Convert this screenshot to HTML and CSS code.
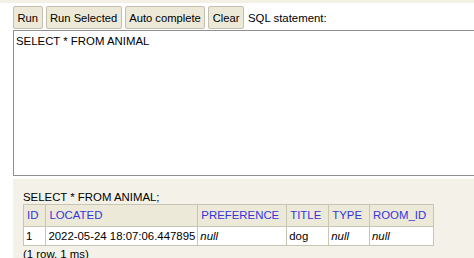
FILE: index.html
```html
<!DOCTYPE html>
<html>
<head>
<meta charset="utf-8">
<link rel="stylesheet" href="styles.css">
</head>
<body>
<div class="topband"></div>
<div class="toolbar">
  <button class="btn">Run</button>
  <button class="btn">Run Selected</button>
  <button class="btn">Auto complete</button>
  <button class="btn">Clear</button>
  <span class="label">SQL statement:</span>
</div>
<div class="editor">SELECT * FROM ANIMAL</div>
<div class="result">
  <div class="stmt">SELECT * FROM ANIMAL;</div>
  <table class="grid">
    <tr><th>ID</th><th>LOCATED</th><th>PREFERENCE</th><th>TITLE</th><th>TYPE</th><th>ROOM_ID</th></tr>
    <tr><td>1</td><td>2022-05-24 18:07:06.447895</td><td class="null">null</td><td>dog</td><td class="null">null</td><td class="null">null</td></tr>
  </table>
  <div class="meta">(1 row, 1 ms)</div>
</div>
</body>
</html>
```
FILE: styles.css
```css
html, body {
  margin: 0;
  padding: 0;
  background: #ffffff;
  font-family: "Liberation Sans", Arial, sans-serif;
  font-size: 11.4px;
  color: #000;
  overflow: hidden;
  height: 258px;
}
.topband {
  height: 3px;
  background: #f3f1e6;
}
.toolbar {
  display: flex;
  align-items: center;
  gap: 3px;
  padding: 3px 0 1px 13px;
}
.btn {
  font-family: "Liberation Sans", Arial, sans-serif;
  font-size: 11.2px;
  background: #ece9d8;
  border: 1px solid #c3c0b0;
  border-radius: 2px;
  padding: 3px 3.5px;
  height: 23px;
  color: #000;
  margin: 0;
}
.label {
  margin-left: 1px;
}
.editor {
  margin-left: 13px;
  width: 480px;
  height: 138px;
  border: 1px solid #8f8f8f;
  border-right: none;
  padding: 4px 2px 2px 2px;
  box-sizing: content-box;
}
.result {
  margin: 3px 0 0 13px;
  background: #f4f2e8;
  padding: 8px 10px 4px 10px;
  height: 80px;
}
.stmt {
  margin-top: 4px;
  margin-bottom: 1px;
}
.grid {
  border-collapse: collapse;
  background: #fff;
}
.grid th, .grid td {
  border: 1px solid #c8c5b5;
  padding: 3px 2px;
  text-align: left;
  white-space: nowrap;
  font-size: 11.4px;
}
.grid th {
  background: #ece9d8;
  color: #3535d8;
  font-weight: normal;
  padding: 4px 7px 5px 3px;
}
.grid td.null {
  font-style: italic;
}
.meta {
  margin-top: 2px;
}
```
